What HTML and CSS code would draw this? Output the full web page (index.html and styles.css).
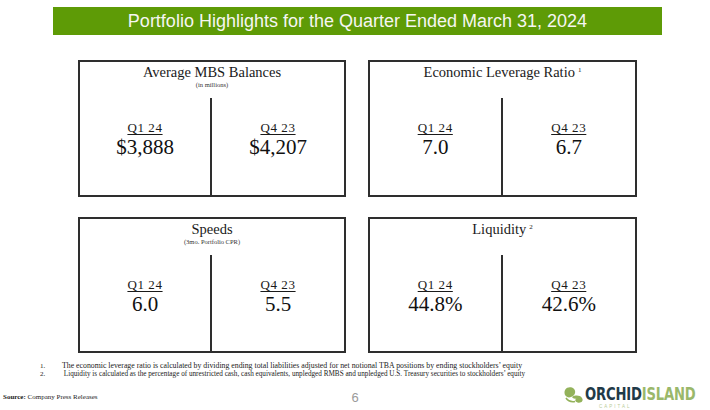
FILE: index.html
```html
<!DOCTYPE html>
<html lang="en">
<head>
<meta charset="utf-8">
<title>Portfolio Highlights</title>
<link rel="stylesheet" href="styles.css">
</head>
<body>
<div class="page">
  <header class="banner">Portfolio Highlights for the Quarter Ended March 31, 2024</header>

  <main class="cards">
    <section class="card">
      <div class="card-head">
        <h2 class="card-title">Average MBS Balances</h2>
        <p class="card-sub">(in millions)</p>
      </div>
      <div class="card-body">
        <div class="col"><span class="q">Q1 24</span><span class="val">$3,888</span></div>
        <div class="col"><span class="q">Q4 23</span><span class="val">$4,207</span></div>
      </div>
    </section>

    <section class="card">
      <div class="card-head">
        <h2 class="card-title">Economic Leverage Ratio<sup class="sup">1</sup></h2>
      </div>
      <div class="card-body">
        <div class="col"><span class="q">Q1 24</span><span class="val">7.0</span></div>
        <div class="col"><span class="q">Q4 23</span><span class="val">6.7</span></div>
      </div>
    </section>

    <section class="card">
      <div class="card-head">
        <h2 class="card-title">Speeds</h2>
        <p class="card-sub">(3mo. Portfolio CPR)</p>
      </div>
      <div class="card-body">
        <div class="col"><span class="q">Q1 24</span><span class="val">6.0</span></div>
        <div class="col"><span class="q">Q4 23</span><span class="val">5.5</span></div>
      </div>
    </section>

    <section class="card">
      <div class="card-head">
        <h2 class="card-title">Liquidity<sup class="sup">2</sup></h2>
      </div>
      <div class="card-body">
        <div class="col"><span class="q">Q1 24</span><span class="val">44.8%</span></div>
        <div class="col"><span class="q">Q4 23</span><span class="val">42.6%</span></div>
      </div>
    </section>
  </main>

  <ol class="notes">
    <li class="note-a"><span class="num">1.</span><span>The economic leverage ratio is calculated by dividing ending total liabilities adjusted for net notional TBA positions by ending stockholders’ equity</span></li>
    <li class="note-b"><span class="num">2.</span><span>&nbsp;Liquidity is calculated as the percentage of unrestricted cash, cash equivalents, unpledged RMBS and unpledged U.S. Treasury securities to stockholders’ equity</span></li>
  </ol>

  <footer class="foot">
    <p class="source"><b>Source:</b> Company Press Releases</p>
    <span class="pagenum">6</span>
    <div class="logo">
      <svg class="logo-mark" viewBox="0 0 22 18" width="22" height="18" aria-hidden="true">
        <path d="M2 9 C0 4 4 0 9 1.5 C13 3 13 8 10 10 C7 12 4 12 2 9 Z" fill="#93b25a"/>
        <path d="M9 11 C12 9 17 9 19 12 C21 15 18 17.5 14.5 16.5 C12 15.8 11.5 13.5 13.5 12.8 C11.5 12.5 10 13 9 11 Z" fill="#93b25a"/>
        <path d="M3 12 C5 15 9 16 12 15.5" stroke="#93b25a" stroke-width="1.6" fill="none"/>
      </svg>
      <div class="logo-text">
        <span class="logo-word"><span class="orchid">ORCHID</span><span class="island">ISLAND</span></span>
        <span class="capital">CAPITAL</span>
      </div>
    </div>
  </footer>
</div>
</body>
</html>
```

FILE: styles.css
```css
* { box-sizing: border-box; }

html, body {
  margin: 0;
  padding: 0;
  background: #ffffff;
}

.page {
  width: 710px;
  height: 410px;
  overflow: hidden;
  display: flex;
  flex-direction: column;
  font-family: "Liberation Serif", "Times New Roman", serif;
  color: #1a1a1a;
}

.banner {
  margin: 7px 0 0 53px;
  width: 609px;
  height: 28px;
  background: #5e9b06;
  color: #f6f6f2;
  font-family: "Liberation Sans", Arial, sans-serif;
  font-size: 18px;
  line-height: 28px;
  text-align: center;
}

.cards {
  margin: 25px 0 0 78px;
  display: grid;
  grid-template-columns: 268px 269px;
  grid-template-rows: 137px 136px;
  column-gap: 22px;
  row-gap: 20px;
}

.card {
  border: 2px solid #2e2e2e;
  display: flex;
  flex-direction: column;
}

.card-head {
  height: 36px;
  padding-top: 2px;
  text-align: center;
}

.card-title {
  margin: 0;
  font-size: 14.5px;
  line-height: 17px;
  font-weight: normal;
  color: #1a1a1a;
}

.sup {
  font-size: 7px;
  vertical-align: 5px;
  line-height: 0;
  margin-left: 3px;
}

.card-sub {
  margin: 0;
  font-size: 6.5px;
  line-height: 8px;
  color: #333;
}

.card-body {
  flex: 1;
  display: grid;
  grid-template-columns: 1fr 1fr;
}

.col {
  display: flex;
  flex-direction: column;
  align-items: center;
  padding-top: 23px;
}

.col:first-child {
  border-right: 2px solid #2e2e2e;
}

.q {
  font-size: 13px;
  line-height: 14px;
  letter-spacing: 0.6px;
  text-decoration: underline;
  text-decoration-thickness: 1px;
  text-underline-offset: 2px;
  color: #1a1a1a;
}

.val {
  font-size: 21px;
  line-height: 24px;
  color: #111;
}

.notes {
  list-style: none;
  margin: 9px 0 0 40px;
  padding: 0;
  line-height: 7.5px;
  color: #222;
}

.notes li {
  display: flex;
  align-items: baseline;
}

.note-a { font-size: 7.8px; }
.note-b { font-size: 7.2px; }

.num {
  width: 22px;
  flex: none;
  font-size: 7px;
}

.foot {
  margin-top: 7px;
  display: grid;
  grid-template-columns: 1fr auto 1fr;
  align-items: center;
}

.source {
  margin: 0 0 0 3px;
  font-size: 7px;
  color: #222;
}

.pagenum {
  font-family: "Liberation Sans", Arial, sans-serif;
  font-size: 13px;
  color: #9a9a9a;
}

.logo {
  justify-self: end;
  margin-right: 5px;
  display: flex;
  align-items: flex-start;
}

.logo-mark {
  margin-top: 1px;
}

.logo-text {
  display: flex;
  flex-direction: column;
  width: 120px;
}

.logo-word {
  font-family: "DejaVu Sans Condensed", "Liberation Sans Narrow", sans-serif;
  font-weight: bold;
  font-size: 17px;
  line-height: 19px;
  letter-spacing: -0.2px;
  white-space: nowrap;
  transform: scaleX(0.86);
  transform-origin: left center;
}

.orchid { color: #1f3a48; }
.island { color: #9ab86a; }

.capital {
  font-family: "Liberation Sans", Arial, sans-serif;
  font-size: 4.5px;
  line-height: 5px;
  letter-spacing: 2px;
  color: #b9cc98;
  margin-left: 14px;
}
```
